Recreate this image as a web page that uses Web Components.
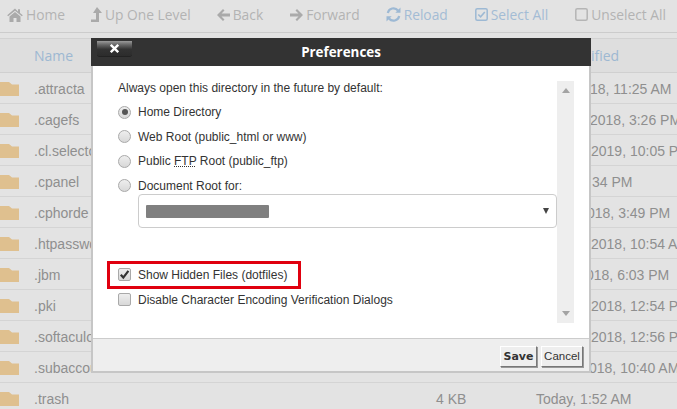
<!DOCTYPE html>
<html>
<head>
<meta charset="utf-8">
<title>Preferences</title>
<style>
html,body{margin:0;padding:0;height:100%;overflow:hidden;background:#e3e3e3}
</style>
</head>
<body>
<file-manager>
  <fm-toolbar></fm-toolbar>
  <fm-table></fm-table>
  <prefs-dialog></prefs-dialog>
</file-manager>
<script>
class FileManager extends HTMLElement {
  constructor() { super(); this.attachShadow({ mode: "open" }); }
  connectedCallback() {
    this.shadowRoot.innerHTML = `
      <style>
        :host{display:block;position:relative;width:677px;height:409px;overflow:hidden;background:#e3e3e3}
      </style>
      <slot></slot>`;
  }
}

const TOOL_ICONS = {
  home: `<svg width="16" height="14" viewBox="0 0 16 14"><path fill="#aaa" d="M8 .6 .2 7.200l1 1.100L8 2.700l6.800 5.600 1-1.100-2.800-2.300V1.200h-2v2.400zM2.500 8.600V14h4V10h3v4h4V8.600L8 4z"/></svg>`,
  up: `<svg width="12" height="15" viewBox="0 0 12 15"><path fill="#aaa" d="M7 0 12 6H9v9H1v-2.500h5V6H3z"/></svg>`,
  back: `<svg width="13" height="12" viewBox="0 0 13 12"><path fill="#aaa" d="M6 0 7.500 1.500 4.500 4.600H13v2.800H4.500l3 3.100L6 12 0 6z"/></svg>`,
  fwd: `<svg width="13" height="12" viewBox="0 0 13 12"><path fill="#aaa" d="M7 0 5.500 1.500l3 3.100H0v2.800h8.500l-3 3.100L7 12l6-6z"/></svg>`,
  reload: `<svg width="15" height="15" viewBox="0 0 15 15"><path fill="none" stroke="#9db9d4" stroke-width="2.200" d="M1.800 6A5.800 5.800 0 0 1 12 3.500M13.200 9A5.800 5.800 0 0 1 3 11.500"/><path fill="#9db9d4" d="M14.500 .5v5.200H9.300zM.5 14.500V9.300h5.200z"/></svg>`,
  check: `<svg width="13" height="13" viewBox="0 0 13 13"><rect x=".8" y=".8" width="11.400" height="11.400" rx="1.500" fill="none" stroke="#9db9d4" stroke-width="1.500"/><path fill="none" stroke="#9db9d4" stroke-width="1.600" d="M3.300 6.500 5.600 8.800 9.800 4"/></svg>`,
  box: `<svg width="13" height="13" viewBox="0 0 13 13"><rect x=".8" y=".8" width="11.400" height="11.400" rx="1.500" fill="none" stroke="#b5b5b5" stroke-width="1.500"/></svg>`
};

class FmToolbar extends HTMLElement {
  constructor() { super(); this.attachShadow({ mode: "open" }); }
  connectedCallback() {
    const items = [
      ["home", "Home", 0, 0], ["up", "Up One Level", 25, 0], ["back", "Back", 26, 0], ["fwd", "Forward", 27, 0],
      ["reload", "Reload", 26, 1], ["check", "Select All", 27, 1], ["box", "Unselect All", 27, 0]
    ];
    this.shadowRoot.innerHTML = `
      <style>
        :host{display:block;height:32px;border-bottom:1px solid #ccc;margin-bottom:5px;box-sizing:content-box}
        .bar{display:flex;align-items:center;height:29px;padding-left:7px;font:13.8px "Open Sans",sans-serif;color:#b3b3b3}
        .it{display:flex;align-items:center;gap:3px;white-space:nowrap}
        .it svg{flex:none}
        .on{color:#a3bcd5}
      </style>
      <div class="bar">${items.map(([i, t, m, on]) => `<span class="it ${on ? "on" : ""}" style="margin-left:${m}px">${TOOL_ICONS[i]}${t}</span>`).join("")}</div>`;
  }
}

class FmTable extends HTMLElement {
  constructor() { super(); this.attachShadow({ mode: "open" }); }
  connectedCallback() {
    // only the part of each date that shows past the dialog
    const rows = [
      [".attracta", "", "18, 11:25 AM", 590], [".cagefs", "", "2018, 3:26 PM", 590], [".cl.selector", "", "2019, 10:05 PM", 591],
      [".cpanel", "", "34 PM", 592], [".cphorde", "", "018, 3:49 PM", 587], [".htpasswds", "", "2018, 10:54 AM", 591],
      [".jbm", "", "018, 6:03 PM", 586], [".pki", "", "2018, 12:54 PM", 591], [".softaculous", "", "2018, 12:56 PM", 591],
      [".subaccounts", "", "018, 10:40 AM", 589], [".trash", "4 KB", "Today, 1:52 AM", 536]
    ];
    const folder = `<svg width="19" height="14" viewBox="0 0 19 14"><path fill="#dfc08f" d="M0 0h9l3 2.500h7V14H0z"/></svg>`;
    this.shadowRoot.innerHTML = `
      <style>
        :host{display:block;font:14px "Liberation Sans",Arial,sans-serif;color:#8f8f8f}
        .head{display:flex;height:35px;align-items:center;padding-left:34px;background:#dedede;position:relative;
          border-top:1px solid #d2d2d2;border-bottom:1px solid #d0d0d0;box-sizing:border-box;font-family:"Open Sans",sans-serif;color:#9db8d2}
        .mod{position:absolute;left:531px}
        .row{display:flex;align-items:center;height:31px;padding-top:2px;box-sizing:border-box;border-bottom:1px solid #d4d4d4;position:relative}
        .row svg{flex:none;margin:0 15px 0 0}
        .name{white-space:nowrap}
        .size{position:absolute;left:436px}
        .date{position:absolute;white-space:nowrap}
      </style>
      <div class="head"><span>Name</span><span class="mod">Last Modified</span></div>
      ${rows.map(([n, s, d, x]) => `<div class="row">${folder}<span class="name">${n}</span>${s ? `<span class="size">${s}</span>` : ""}<span class="date" style="left:${x}px">${d}</span></div>`).join("")}`;
  }
}

class PrefRadio extends HTMLElement {
  constructor() { super(); this.attachShadow({ mode: "open" }); }
  connectedCallback() {
    const on = this.hasAttribute("checked");
    this.shadowRoot.innerHTML = `
      <style>
        :host{display:flex;align-items:center;gap:7px;height:16px}
        .b{width:13px;height:13px;box-sizing:border-box;border-radius:50%;flex:none;border:1px solid #a9a9a9;
          background:linear-gradient(#eee,#d8d8d8);display:flex;align-items:center;justify-content:center}
        .d{width:6px;height:6px;border-radius:50%;background:#555}
      </style>
      <span class="b">${on ? `<span class="d"></span>` : ""}</span><span><slot></slot></span>`;
  }
}

class PrefCheck extends HTMLElement {
  constructor() { super(); this.attachShadow({ mode: "open" }); }
  connectedCallback() {
    const on = this.hasAttribute("checked");
    this.shadowRoot.innerHTML = `
      <style>
        :host{display:flex;align-items:center;gap:7px;height:16px}
        .b{width:13px;height:13px;box-sizing:border-box;border-radius:2px;flex:none;border:1px solid #a9a9a9;
          background:linear-gradient(#eee,#d8d8d8);display:flex;align-items:center;justify-content:center}
      </style>
      <span class="b">${on ? `<svg width="11" height="11" viewBox="0 0 11 11"><path fill="none" stroke="#333" stroke-width="2.200" d="M1.800 5.800 4.300 8.600 9.400 1.800"/></svg>` : ""}</span><span><slot></slot></span>`;
  }
}

class PrefsDialog extends HTMLElement {
  constructor() { super(); this.attachShadow({ mode: "open" }); }
  connectedCallback() {
    this.shadowRoot.innerHTML = `
      <style>
        :host{display:flex;flex-direction:column;position:absolute;left:91px;top:38px;width:500px;height:335px;box-sizing:border-box;
          background:#fff;border:solid #c6c6c6;border-width:0 2px 2px 2px;font:12px "Liberation Sans",Arial,sans-serif;color:#333}
        .hd{flex:none;height:28px;background:#333;margin:0 -2px;display:flex;align-items:center;justify-content:center;position:relative;
          color:#fff;font-weight:bold;font-size:13.4px;font-family:"Open Sans",sans-serif}
        .x{position:absolute;left:6px;top:3px;width:35px;height:15px;border-radius:0 0 3px 3px;background:linear-gradient(#9a9a9a 0,#666 25%,#333 55%,#2c2c2c);
          box-shadow:0 1px 0 #222;display:flex;align-items:center;justify-content:center}
        .body{flex:1;display:flex;min-height:0;padding:15px 15px 15px 25px}
        .scroll{flex:1;min-width:0}
        .sb{flex:none;width:17px;background:#eee;display:flex;flex-direction:column;justify-content:space-between;align-items:center;padding:7px 0;box-sizing:border-box}
        .ar{width:0;height:0;border:4px solid transparent}
        .ar.u{border-bottom:5px solid #a3a3a3;border-top:0}
        .ar.d{border-top:5px solid #a3a3a3;border-bottom:0}
        p{margin:0 0 9px}
        .opts{display:flex;flex-direction:column;gap:8.67px}
        .sel{margin:0 0 0 20px;width:419px;height:34px;box-sizing:border-box;border:1px solid #ccc;border-radius:4px;display:flex;align-items:center;padding:0 7px;justify-content:space-between}
        .mask{width:123px;height:13px;background:#808080;border-radius:1px;margin-top:2px}
        .car{width:0;height:0;border:3px solid transparent;border-top:6px solid #444;border-bottom:0}
        .hl{position:relative;margin-top:39px}
        .hl::before{content:"";position:absolute;left:-11px;top:-6px;width:188px;height:22px;border:3px solid #e0000f;pointer-events:none}
        .second{margin-top:9px}
        abbr{text-decoration:underline dotted;text-underline-offset:1px}
        .ft{flex:none;height:33px;background:#eee;border-top:1px solid #ccc;box-sizing:border-box;display:flex;align-items:center;justify-content:flex-end;gap:4px;padding:2px 6px 0 0}
        button{height:21px;padding:0;border:1px solid;border-color:#fff #777 #777 #fff;background:#eee;font:11px "Liberation Sans",Arial,sans-serif;color:#333;box-shadow:1px 1px 0 #999}
        .save{width:37px;font-weight:bold;font-family:"DejaVu Sans",sans-serif}
        .cancel{width:42px;font-size:11.500px}
      </style>
      <div class="hd"><span class="x"><svg width="9" height="9" viewBox="0 0 9 9"><path stroke="#fff" stroke-width="2.300" d="M.8.8l7.400 7.400M8.200.8.8 8.200"/></svg></span>Preferences</div>
      <div class="body">
        <div class="scroll">
          <p>Always open this directory in the future by default:</p>
          <div class="opts">
            <pref-radio checked>Home Directory</pref-radio>
            <pref-radio>Web Root (public_html or www)</pref-radio>
            <pref-radio>Public <abbr>FTP</abbr> Root (public_ftp)</pref-radio>
            <pref-radio>Document Root for:</pref-radio>
          </div>
          <div class="sel"><span class="mask"></span><span class="car"></span></div>
          <div class="hl"><pref-check checked>Show Hidden Files (dotfiles)</pref-check></div>
          <div class="second"><pref-check>Disable Character Encoding Verification Dialogs</pref-check></div>
        </div>
        <div class="sb"><span class="ar u"></span><span class="ar d"></span></div>
      </div>
      <div class="ft"><button class="save">Save</button><button class="cancel">Cancel</button></div>`;
  }
}

customElements.define("file-manager", FileManager);
customElements.define("fm-toolbar", FmToolbar);
customElements.define("fm-table", FmTable);
customElements.define("pref-radio", PrefRadio);
customElements.define("pref-check", PrefCheck);
customElements.define("prefs-dialog", PrefsDialog);
</script>
</body>
</html>
